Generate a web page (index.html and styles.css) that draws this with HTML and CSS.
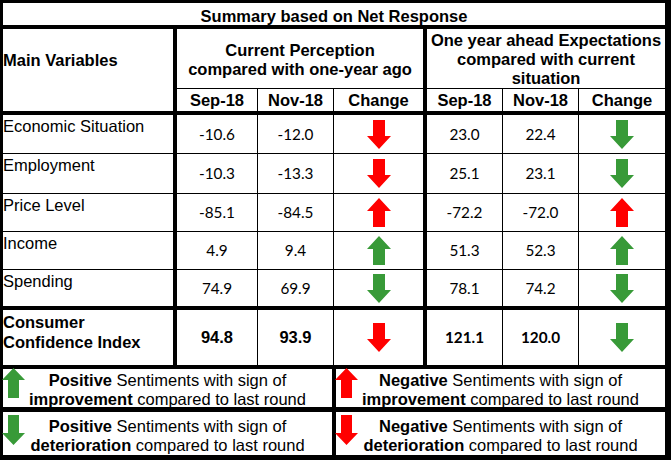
FILE: index.html
```html
<!DOCTYPE html>
<html lang="en">
<head>
<meta charset="utf-8">
<title>Summary based on Net Response</title>
<link rel="stylesheet" href="styles.css">
</head>
<body>
<div class="sheet">
  <table class="summary">
    <colgroup>
      <col class="c-var"><col class="c-sep"><col class="c-nov"><col class="c-chg">
      <col class="c-sep2"><col class="c-nov2"><col class="c-chg2">
    </colgroup>
    <tr class="r-title">
      <th colspan="7" class="title last">Summary based on Net Response</th>
    </tr>
    <tr class="r-group">
      <th rowspan="2" class="mainvar thick-r">Main Variables</th>
      <th colspan="3" class="grp thick-r">Current Perception<br>compared with one-year ago</th>
      <th colspan="3" class="grp last">One year ahead Expectations<br>compared with current<br>situation</th>
    </tr>
    <tr class="r-sub">
      <th>Sep-18</th><th>Nov-18</th><th class="thick-r">Change</th>
      <th>Sep-18</th><th>Nov-18</th><th class="last">Change</th>
    </tr>
    <tr class="r-econ">
      <td class="var thick-r">Economic Situation</td>
      <td class="num">-10.6</td><td class="num">-12.0</td>
      <td class="chg thick-r"><svg class="arrow red" viewBox="0 0 24 29"><path d="M6 0H18V16H24L12 29L0 16H6Z"/></svg></td>
      <td class="num">23.0</td><td class="num">22.4</td>
      <td class="chg last"><svg class="arrow green" viewBox="0 0 24 29"><path d="M6 0H18V16H24L12 29L0 16H6Z"/></svg></td>
    </tr>
    <tr class="r-emp">
      <td class="var thick-r">Employment</td>
      <td class="num">-10.3</td><td class="num">-13.3</td>
      <td class="chg thick-r"><svg class="arrow red" viewBox="0 0 24 29"><path d="M6 0H18V16H24L12 29L0 16H6Z"/></svg></td>
      <td class="num">25.1</td><td class="num">23.1</td>
      <td class="chg last"><svg class="arrow green" viewBox="0 0 24 29"><path d="M6 0H18V16H24L12 29L0 16H6Z"/></svg></td>
    </tr>
    <tr class="r-price">
      <td class="var thick-r">Price Level</td>
      <td class="num">-85.1</td><td class="num">-84.5</td>
      <td class="chg thick-r"><svg class="arrow red" viewBox="0 0 24 29"><path d="M12 0L24 13H18V29H6V13H0Z"/></svg></td>
      <td class="num">-72.2</td><td class="num">-72.0</td>
      <td class="chg last"><svg class="arrow red" viewBox="0 0 24 29"><path d="M12 0L24 13H18V29H6V13H0Z"/></svg></td>
    </tr>
    <tr class="r-inc">
      <td class="var thick-r">Income</td>
      <td class="num">4.9</td><td class="num">9.4</td>
      <td class="chg thick-r"><svg class="arrow green" viewBox="0 0 24 29"><path d="M12 0L24 13H18V29H6V13H0Z"/></svg></td>
      <td class="num">51.3</td><td class="num">52.3</td>
      <td class="chg last"><svg class="arrow green" viewBox="0 0 24 29"><path d="M12 0L24 13H18V29H6V13H0Z"/></svg></td>
    </tr>
    <tr class="r-spend thick-b">
      <td class="var thick-r">Spending</td>
      <td class="num">74.9</td><td class="num">69.9</td>
      <td class="chg thick-r"><svg class="arrow green" viewBox="0 0 24 29"><path d="M6 0H18V16H24L12 29L0 16H6Z"/></svg></td>
      <td class="num">78.1</td><td class="num">74.2</td>
      <td class="chg last"><svg class="arrow green" viewBox="0 0 24 29"><path d="M6 0H18V16H24L12 29L0 16H6Z"/></svg></td>
    </tr>
    <tr class="r-cci thick-b">
      <td class="var cci thick-r">Consumer<br>Confidence Index</td>
      <td class="num bold-arial">94.8</td><td class="num bold-arial">93.9</td>
      <td class="chg thick-r"><svg class="arrow red" viewBox="0 0 24 29"><path d="M6 0H18V16H24L12 29L0 16H6Z"/></svg></td>
      <td class="num bold-cal">121.1</td><td class="num bold-cal">120.0</td>
      <td class="chg last"><svg class="arrow green" viewBox="0 0 24 29"><path d="M6 0H18V16H24L12 29L0 16H6Z"/></svg></td>
    </tr>
  </table>

  <div class="legend">
    <div class="lg-box lg-left lg-row1">
      <svg class="lg-arrow green" viewBox="0 0 23 30"><path d="M11.5 0L23 12H17V30H6V12H0Z"/></svg>
      <p class="lg-text"><b>Positive</b> Sentiments with sign of<br><b>improvement</b> compared to last round</p>
    </div>
    <div class="lg-box lg-right lg-row1">
      <svg class="lg-arrow red" viewBox="0 0 23 30"><path d="M11.5 0L23 12H17V30H6V12H0Z"/></svg>
      <p class="lg-text"><b>Negative</b> Sentiments with sign of<br><b>improvement</b> compared to last round</p>
    </div>
    <div class="lg-box lg-left lg-row2">
      <svg class="lg-arrow green" viewBox="0 0 23 30"><path d="M6 0H17V18H23L11.5 30L0 18H6Z"/></svg>
      <p class="lg-text"><b>Positive</b> Sentiments with sign of<br><b>deterioration</b> compared to last round</p>
    </div>
    <div class="lg-box lg-right lg-row2">
      <svg class="lg-arrow red" viewBox="0 0 23 30"><path d="M6 0H17V18H23L11.5 30L0 18H6Z"/></svg>
      <p class="lg-text"><b>Negative</b> Sentiments with sign of<br><b>deterioration</b> compared to last round</p>
    </div>
  </div>
</div>
</body>
</html>
```

FILE: styles.css
```css
html, body {
  margin: 0;
  padding: 0;
  background: #ffffff;
}

.sheet {
  width: 671px;
  height: 462px;
  font-family: "Liberation Sans", Arial, sans-serif;
  font-size: 16.5px;
  line-height: 19px;
  color: #000;
}

.summary {
  width: 671px;
  table-layout: fixed;
  border-collapse: separate;
  border-spacing: 0;
  border-left: 3px solid #000;
  border-top: 3px solid #000;
}

.c-var { width: 174px; }
.c-sep { width: 81px; }
.c-nov { width: 76px; }
.c-chg { width: 93px; }
.c-sep2 { width: 76px; }
.c-nov2 { width: 76px; }
.c-chg2 { width: 92px; }

.summary th,
.summary td {
  padding: 0;
  border-right: 1px solid #000;
  border-bottom: 1px solid #000;
  text-align: center;
  vertical-align: middle;
}

.summary th {
  font-weight: bold;
}

.summary .thick-r { border-right-width: 4px; }
.summary .last { border-right-width: 6px; }

.r-title { height: 26px; }
.r-group { height: 60px; }
.r-sub { height: 26px; }
.r-econ { height: 39px; }
.r-emp { height: 40px; }
.r-price { height: 38px; }
.r-inc { height: 38px; }
.r-spend { height: 40px; }
.r-cci { height: 59px; }

.summary .title {
  border-bottom-width: 4px;
  vertical-align: bottom;
  line-height: 17px;
  padding-bottom: 0;
}

.summary .mainvar {
  text-align: left;
  vertical-align: top;
  padding: 22px 0 0 0;
  border-bottom-width: 4px;
}

.summary .grp {
  white-space: nowrap;
  padding-top: 2px;
}

.r-sub th {
  border-bottom-width: 4px;
}

.summary .var {
  text-align: left;
  vertical-align: top;
  padding-top: 2px;
  white-space: nowrap;
}

.summary .cci {
  font-weight: bold;
  line-height: 20px;
}

.thick-b td {
  border-bottom-width: 4px;
}

.num {
  font-family: Lato, "Liberation Sans", sans-serif;
  font-size: 15.3px;
}

.num.bold-arial {
  font-family: "Liberation Sans", Arial, sans-serif;
  font-size: 16.5px;
  font-weight: bold;
}

.num.bold-cal {
  font-weight: bold;
}

.arrow {
  display: block;
  width: 24px;
  height: 29px;
  margin: 0 auto;
}

.red { fill: #ff0000; }
.green { fill: #389a38; }

.legend {
  display: grid;
  grid-template-columns: 336px 335px;
}

.lg-box {
  display: grid;
  grid-template-columns: 24px 1fr 24px;
  border-bottom: 5px solid #000;
}

.lg-row1 { height: 38px; }
.lg-row2 { height: 43px; }

.lg-left {
  border-left: 3px solid #000;
  border-right: 4px solid #000;
}

.lg-right {
  border-right: 6px solid #000;
}

.lg-arrow {
  width: 23px;
  height: 30px;
  margin-left: -1px;
  align-self: start;
}

.lg-row1 .lg-arrow { margin-top: -1px; }
.lg-row2 .lg-arrow { margin-top: 3px; }

.lg-text {
  margin: 0;
  text-align: center;
  white-space: nowrap;
  align-self: start;
}

.lg-row1 .lg-text { padding-top: 2px; }
.lg-row2 .lg-text { padding-top: 5px; }
```
